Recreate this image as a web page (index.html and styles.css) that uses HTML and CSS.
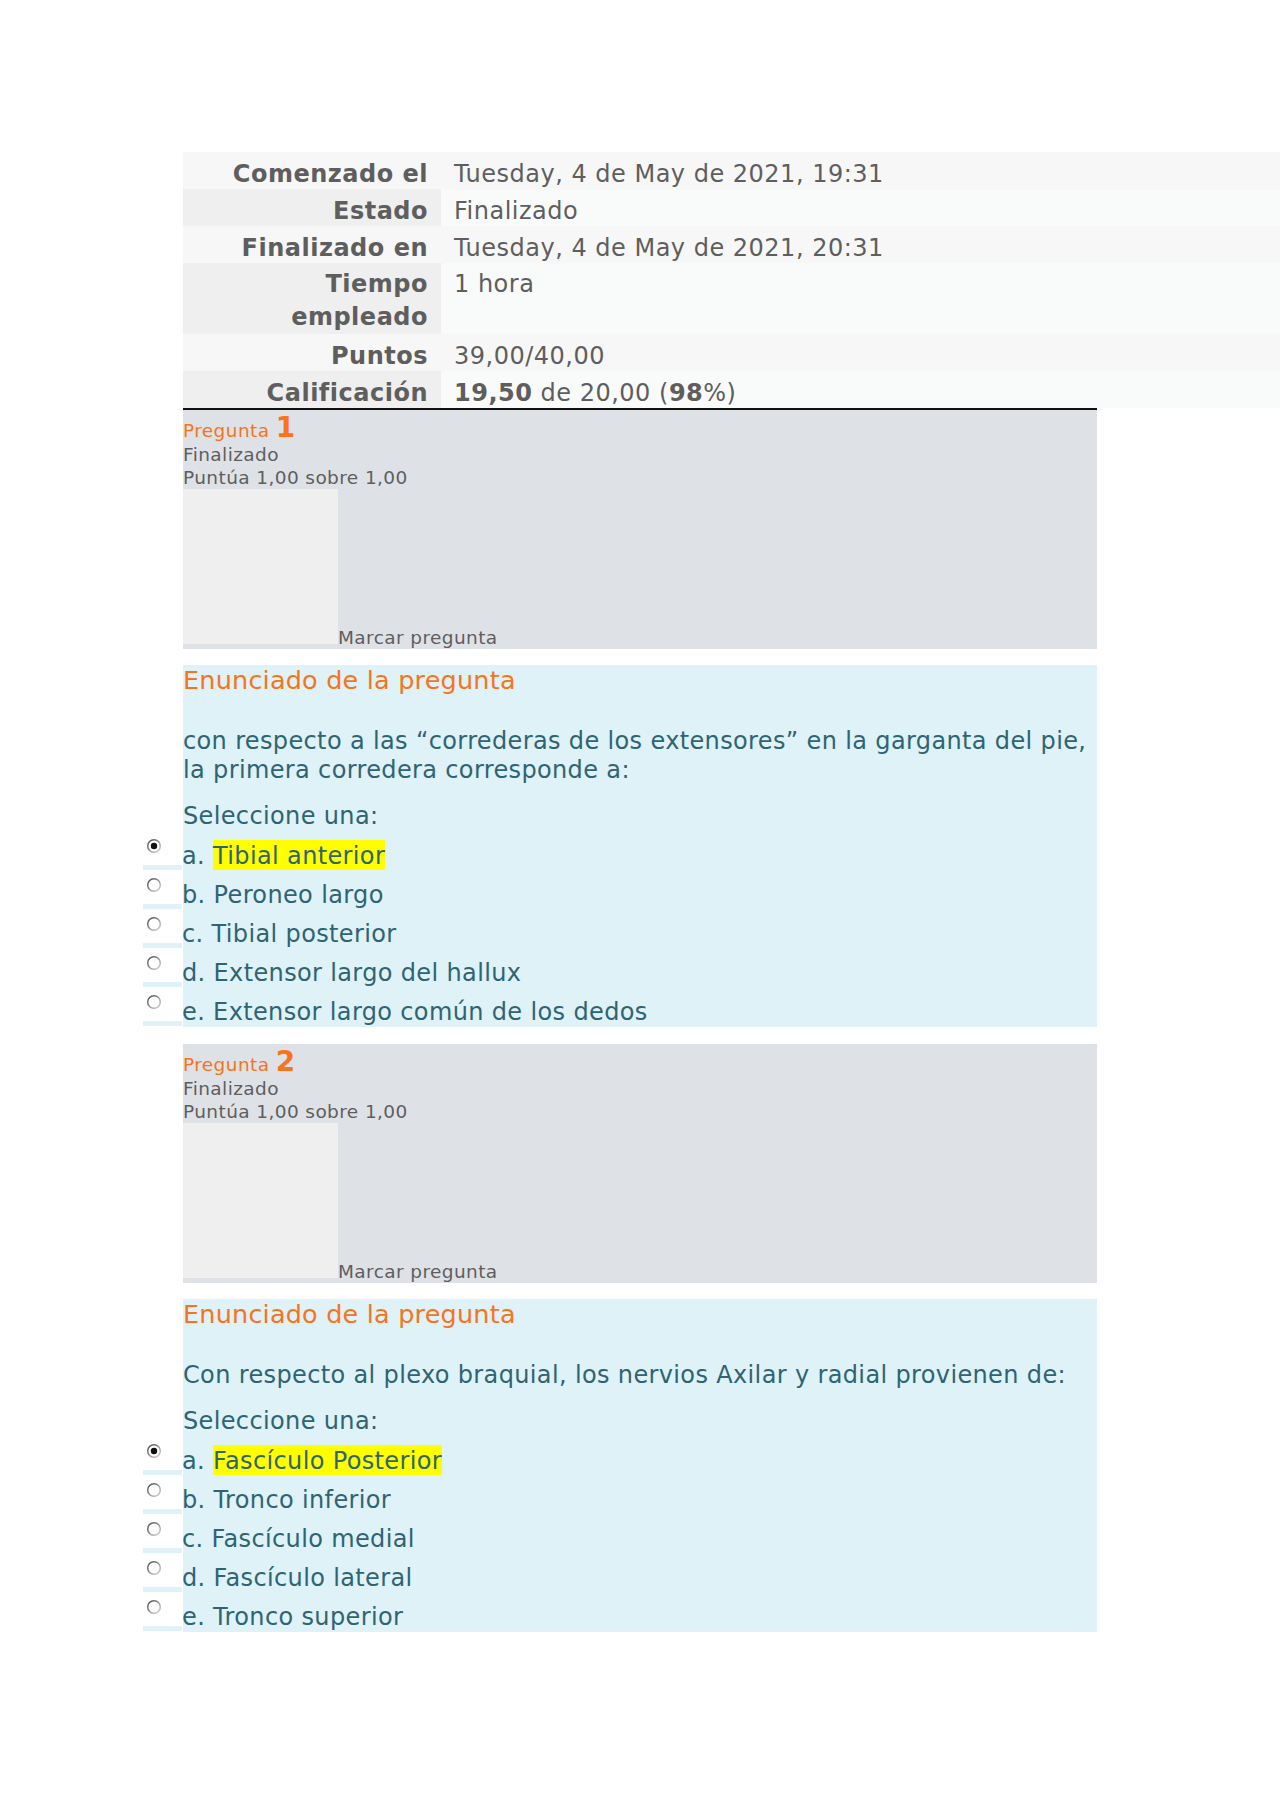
FILE: index.html
```html
<!DOCTYPE html>
<html lang="es">
<head>
<meta charset="utf-8">
<title>Revisión del intento</title>
<link rel="stylesheet" href="styles.css">
</head>
<body>
<div class="page">
  <table class="summary">
    <tr><th>Comenzado el</th><td>Tuesday, 4 de May de 2021, 19:31</td></tr>
    <tr><th>Estado</th><td>Finalizado</td></tr>
    <tr><th>Finalizado en</th><td>Tuesday, 4 de May de 2021, 20:31</td></tr>
    <tr class="tall"><th>Tiempo<br>empleado</th><td>1 hora</td></tr>
    <tr><th>Puntos</th><td>39,00/40,00</td></tr>
    <tr><th>Calificación</th><td><b>19,50</b> de 20,00 (<b>98</b>%)</td></tr>
  </table>

  <div class="que">
    <div class="info first">
      <h3 class="qno">Pregunta <span class="num">1</span></h3>
      <div class="state">Finalizado</div>
      <div class="grade">Puntúa 1,00 sobre 1,00</div>
      <div class="flagrow"><div class="flagbox"></div><span class="flag">Marcar pregunta</span></div>
    </div>
    <div class="formulation">
      <h4>Enunciado de la pregunta</h4>
      <p class="qtext">con respecto a las “correderas de los extensores” en la garganta del pie,<br>la primera corredera corresponde a:</p>
      <div class="prompt">Seleccione una:</div>
      <div class="answer">
        <div class="opt"><span class="radio"><svg width="16" height="16" viewBox="0 0 16 16"><defs><linearGradient id="rg1" x1="0" y1="0" x2="1" y2="1"><stop offset="0" stop-color="#4a4a4a"/><stop offset="1" stop-color="#d8d8d8"/></linearGradient></defs><circle cx="8" cy="8" r="6.3" fill="#fff" stroke="url(#rg1)" stroke-width="1.5"/><circle cx="8" cy="8" r="3.2" fill="#111"/></svg></span><span class="label">a. <span class="hl">Tibial anterior</span></span></div>
        <div class="opt"><span class="radio"><svg width="16" height="16" viewBox="0 0 16 16"><circle cx="8" cy="8" r="6.3" fill="#fff" stroke="url(#rg1)" stroke-width="1.5"/></svg></span><span class="label">b. Peroneo largo</span></div>
        <div class="opt"><span class="radio"><svg width="16" height="16" viewBox="0 0 16 16"><circle cx="8" cy="8" r="6.3" fill="#fff" stroke="url(#rg1)" stroke-width="1.5"/></svg></span><span class="label">c. Tibial posterior</span></div>
        <div class="opt"><span class="radio"><svg width="16" height="16" viewBox="0 0 16 16"><circle cx="8" cy="8" r="6.3" fill="#fff" stroke="url(#rg1)" stroke-width="1.5"/></svg></span><span class="label">d. Extensor largo del hallux</span></div>
        <div class="opt"><span class="radio"><svg width="16" height="16" viewBox="0 0 16 16"><circle cx="8" cy="8" r="6.3" fill="#fff" stroke="url(#rg1)" stroke-width="1.5"/></svg></span><span class="label">e. Extensor largo común de los dedos</span></div>
      </div>
    </div>
  </div>

  <div class="que second">
    <div class="info">
      <h3 class="qno">Pregunta <span class="num">2</span></h3>
      <div class="state">Finalizado</div>
      <div class="grade">Puntúa 1,00 sobre 1,00</div>
      <div class="flagrow"><div class="flagbox"></div><span class="flag">Marcar pregunta</span></div>
    </div>
    <div class="formulation">
      <h4>Enunciado de la pregunta</h4>
      <p class="qtext">Con respecto al plexo braquial, los nervios Axilar y radial provienen de:</p>
      <div class="prompt">Seleccione una:</div>
      <div class="answer">
        <div class="opt"><span class="radio"><svg width="16" height="16" viewBox="0 0 16 16"><circle cx="8" cy="8" r="6.3" fill="#fff" stroke="url(#rg1)" stroke-width="1.5"/><circle cx="8" cy="8" r="3.2" fill="#111"/></svg></span><span class="label">a. <span class="hl">Fascículo Posterior</span></span></div>
        <div class="opt"><span class="radio"><svg width="16" height="16" viewBox="0 0 16 16"><circle cx="8" cy="8" r="6.3" fill="#fff" stroke="url(#rg1)" stroke-width="1.5"/></svg></span><span class="label">b. Tronco inferior</span></div>
        <div class="opt"><span class="radio"><svg width="16" height="16" viewBox="0 0 16 16"><circle cx="8" cy="8" r="6.3" fill="#fff" stroke="url(#rg1)" stroke-width="1.5"/></svg></span><span class="label">c. Fascículo medial</span></div>
        <div class="opt"><span class="radio"><svg width="16" height="16" viewBox="0 0 16 16"><circle cx="8" cy="8" r="6.3" fill="#fff" stroke="url(#rg1)" stroke-width="1.5"/></svg></span><span class="label">d. Fascículo lateral</span></div>
        <div class="opt"><span class="radio"><svg width="16" height="16" viewBox="0 0 16 16"><circle cx="8" cy="8" r="6.3" fill="#fff" stroke="url(#rg1)" stroke-width="1.5"/></svg></span><span class="label">e. Tronco superior</span></div>
      </div>
    </div>
  </div>
</div>
</body>
</html>
```

FILE: styles.css
```css
html, body {
  margin: 0;
  padding: 0;
  background: #ffffff;
}

body {
  font-family: "DejaVu Sans", Verdana, sans-serif;
}

.page {
  box-sizing: border-box;
  min-height: 1811px;
  padding: 152px 0 0 183px;
}

/* Summary table */
.summary {
  width: 100%;
  border-collapse: collapse;
  border-spacing: 0;
  font-size: 24px;
  letter-spacing: 0.5px;
  color: #5e5e5e;
}

.summary th,
.summary td {
  padding: 8px 13px 1px;
  line-height: 28px;
  vertical-align: top;
}

.summary tr.tall th,
.summary tr.tall td {
  padding: 5px 13px 0;
  line-height: 33px;
}

.summary th {
  width: 232px;
  text-align: right;
  font-weight: bold;
}

.summary td {
  text-align: left;
  font-weight: normal;
}

.summary tr:nth-child(odd) th,
.summary tr:nth-child(odd) td {
  background: #f7f7f7;
}

.summary tr:nth-child(even) th {
  background: #efefef;
}

.summary tr:nth-child(even) td {
  background: #f9fafa;
}

/* Question blocks */
.que {
  width: 914px;
}

.que.second {
  margin-top: 17px;
}

.info {
  background: #dee2e6;
  color: #5e5e5e;
  font-size: 18.5px;
  letter-spacing: 0.4px;
}

.info.first {
  border-top: 2px solid #111111;
}

.qno {
  margin: 0;
  padding: 4px 0 1px;
  font-size: 18.5px;
  font-weight: normal;
  line-height: 1;
  color: #f8741c;
}

.qno .num {
  font-size: 28px;
  font-weight: bold;
}

.state,
.grade {
  line-height: 23px;
}

.flagrow {
  display: flex;
  align-items: baseline;
  line-height: 23px;
}

.flagbox {
  flex: none;
  width: 155px;
  height: 155px;
  background: #efefef;
}

.formulation {
  margin-top: 16px;
  padding-bottom: 1px;
  background: #def2f8;
  color: #2f6473;
}

.formulation h4 {
  margin: 0;
  font-size: 25.5px;
  font-weight: normal;
  line-height: 30px;
  letter-spacing: 0.2px;
  color: #f8741c;
}

.qtext {
  margin: 32px 0 0;
  font-size: 24px;
  line-height: 29px;
  letter-spacing: 0.36px;
  white-space: nowrap;
}

.prompt {
  margin-top: 17px;
  font-size: 24px;
  line-height: 29px;
  letter-spacing: 0.36px;
}

.opt {
  display: flex;
  height: 39px;
  margin-left: -40px;
  font-size: 24px;
  letter-spacing: 0.36px;
}

.radio {
  flex: none;
  width: 39px;
  height: 34px;
  background: #ffffff;
  border-bottom: 5px solid #def2f8;
}

.radio svg {
  display: block;
  margin: 7px 0 0 3px;
}

.label {
  padding-top: 11px;
  line-height: 28px;
  white-space: nowrap;
}

.hl {
  padding-top: 2px;
  background: #ffff00;
}
```
